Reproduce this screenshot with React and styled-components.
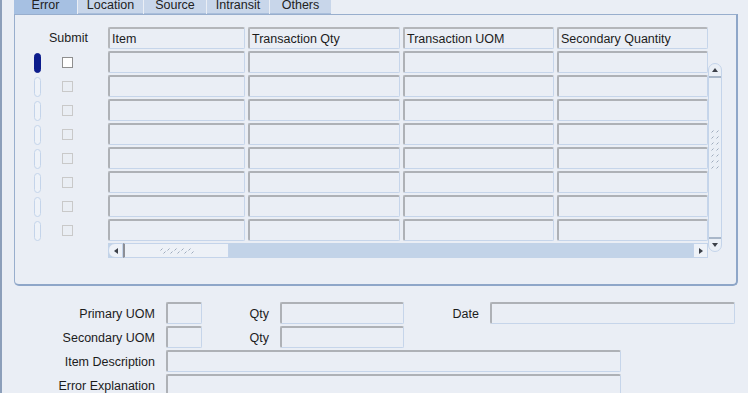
import React from 'react';
import styled, { createGlobalStyle } from 'styled-components';

const GlobalStyle = createGlobalStyle`
  * { box-sizing: border-box; }
  body {
    margin: 0;
    background: #eaeef5;
    font-family: "Liberation Sans", Arial, sans-serif;
    font-size: 12.5px;
    color: #1c1c1c;
  }
`;

const Frame = styled.div`
  height: 393px;
  width: 748px;
  overflow: hidden;
  border-left: 2px solid #8c9fba;
`;

const TabBar = styled.div`
  display: flex;
  margin: -8px 0 0 12px;
  height: 22px;
`;

const Tab = styled.div`
  height: 22px;
  padding-top: 6px;
  width: ${p => p.$w}px;
  margin-right: 1px;
  text-align: center;
  background: ${p => (p.$active ? '#a6c0e2' : '#c8d6ea')};
  border-radius: 0 4px 0 0;
  color: #222;
  border-bottom: ${p => (p.$active ? 'none' : '1px solid #a9bedb')};
`;

const Panel = styled.div`
  margin-left: 12px;
  width: 724px;
  height: 272px;
  border: 1px solid #98aecd;
  border-right: 2px solid #8ea6c8;
  border-bottom: 2px solid #8ea6c8;
  border-radius: 0 0 5px 5px;
  padding: 12px 0 0 19px;
`;

const Table = styled.div`
  display: flex;
  align-items: flex-start;
`;

const IndicatorCol = styled.div`
  width: 7px;
  display: flex;
  flex-direction: column;
  padding-top: 26px;
  gap: 4px;
`;

const Indicator = styled.div`
  width: 7px;
  height: 20px;
  border-radius: 4px;
  background: ${p => (p.$current ? '#0c1c8c' : '#eef2f8')};
  border: 1px solid ${p => (p.$current ? '#0c1c8c' : '#c4d4ea')};
`;

const SubmitCol = styled.div`
  width: 67px;
  display: flex;
  flex-direction: column;
`;

const SubmitHead = styled.div`
  height: 22px;
  line-height: 23px;
  padding-left: 8px;
  margin-bottom: 2px;
`;

const CheckCell = styled.div`
  height: 24px;
  padding: 6px 0 0 21px;
`;

const Check = styled.div`
  width: 11px;
  height: 11px;
  border: 1px solid ${p => (p.$enabled ? '#8f8f8f' : '#c9c9c9')};
  background: ${p => (p.$enabled ? '#ffffff' : '#eaeef4')};
`;

const DataArea = styled.div`
  width: 600px;
  display: flex;
  flex-direction: column;
  gap: 2px;
`;

const Row = styled.div`
  display: flex;
  gap: 3px;
  height: 22px;
`;

const Cell = styled.div`
  width: ${p => p.$w}px;
  height: 22px;
  border: 1px solid #c6d5ea;
  border-top: 2px solid ${p => (p.$head ? '#b4b6ba' : '#aeb1b6')};
  border-left: 2px solid ${p => (p.$head ? '#b4b6ba' : '#aeb1b6')};
  border-radius: 2px;
  background: #eaeef5;
  padding-left: 2px;
  line-height: 20px;
  white-space: nowrap;
  overflow: hidden;
`;

const HScroll = styled.div`
  display: flex;
  height: 15px;
  background: #c2d3e8;
`;

const ArrowBtn = styled.div`
  width: 15px;
  height: 15px;
  background: #eef2f8;
  border: 1px solid #c4d4ea;
  border-radius: ${p => p.$r};
  display: flex;
  align-items: center;
  justify-content: center;
`;

const HThumb = styled.div`
  width: 106px;
  height: 15px;
  background: #edf1f7;
  border: 1px solid #c4d4ea;
  border-left: 2px solid #8c8f96;
  display: flex;
  align-items: center;
  justify-content: center;
`;

const Spacer = styled.div`
  flex: 1;
`;

const VScroll = styled.div`
  width: 14px;
  height: 189px;
  margin-top: 36px;
  border: 1px solid #c4d4ea;
  border-radius: 7px;
  background: #eaeff6;
  display: flex;
  flex-direction: column;
  align-items: center;
`;

const VBtn = styled.div`
  width: 12px;
  height: 14px;
  display: flex;
  align-items: center;
  justify-content: center;
  border-${p => p.$side}: 2px solid #a9b7c9;
`;

const VGrip = styled.div`
  margin-top: 52px;
  width: 12px;
  display: flex;
  justify-content: center;
`;

const Form = styled.div`
  margin-top: 16px;
  display: flex;
  flex-direction: column;
  gap: 2px;
`;

const FormRow = styled.div`
  display: flex;
  align-items: center;
  height: 22px;
`;

const Label = styled.div`
  width: ${p => p.$w}px;
  text-align: right;
  margin-right: 11px;
  white-space: nowrap;
  padding-top: 1px;
`;

const Field = styled.div`
  width: ${p => p.$w}px;
  height: 22px;
  border: 1px solid #c6d5ea;
  border-top: 2px solid #aeb1b6;
  border-left: 2px solid #aeb1b6;
  border-radius: 2px;
  background: #eaeef5;
`;

const Tri = ({ dir }) => {
  const pts = {
    up: '1,5 7,5 4,1',
    down: '1,1 7,1 4,5',
    left: '5,1 5,7 1,4',
    right: '1,1 1,7 5,4',
  }[dir];
  const vertical = dir === 'up' || dir === 'down';
  return (
    <svg width={vertical ? 8 : 6} height={vertical ? 6 : 8}>
      <polygon points={pts} fill="#3c4048" />
    </svg>
  );
};

// small diagonal grip marks, staggered rows
const Grip = ({ cols, rows, dx, dy, shift }) => {
  const marks = [];
  for (let r = 0; r < rows; r++) {
    for (let c = 0; c < cols; c++) {
      const x = c * dx + (r % 2 ? shift : 0);
      const y = r * dy;
      marks.push(<line key={`${r}-${c}`} x1={x + 0.5} y1={y + 2.5} x2={x + 2.5} y2={y + 0.5} stroke="#9eabbd" strokeWidth="1" />);
    }
  }
  return (
    <svg width={(cols - 1) * dx + shift + 3} height={(rows - 1) * dy + 3}>
      {marks}
    </svg>
  );
};

const tabs = [
  { name: 'Error', w: 63 },
  { name: 'Location', w: 65 },
  { name: 'Source', w: 62 },
  { name: 'Intransit', w: 62 },
  { name: 'Others', w: 61 },
];

const columns = [
  { title: 'Item', w: 137 },
  { title: 'Transaction Qty', w: 152 },
  { title: 'Transaction UOM', w: 151 },
  { title: 'Secondary Quantity', w: 151 },
];

const rows = [0, 1, 2, 3, 4, 5, 6, 7];

export default function App() {
  return (
    <>
      <GlobalStyle />
      <Frame>
        <TabBar>
          {tabs.map((t, i) => (
            <Tab key={t.name} $w={t.w} $active={i === 0}>{t.name}</Tab>
          ))}
        </TabBar>
        <Panel>
          <Table>
            <IndicatorCol>
              {rows.map(r => <Indicator key={r} $current={r === 0} />)}
            </IndicatorCol>
            <SubmitCol>
              <SubmitHead>Submit</SubmitHead>
              {rows.map(r => (
                <CheckCell key={r}><Check $enabled={r === 0} /></CheckCell>
              ))}
            </SubmitCol>
            <DataArea>
              <Row>
                {columns.map(c => <Cell key={c.title} $w={c.w} $head>{c.title}</Cell>)}
              </Row>
              {rows.map(r => (
                <Row key={r}>
                  {columns.map(c => <Cell key={c.title} $w={c.w} />)}
                </Row>
              ))}
              <HScroll>
                <ArrowBtn $r="7px 0 0 7px"><Tri dir="left" /></ArrowBtn>
                <HThumb><Grip cols={5} rows={2} dx={7} dy={3} shift={3} /></HThumb>
                <Spacer />
                <ArrowBtn $r="0"><Tri dir="right" /></ArrowBtn>
              </HScroll>
            </DataArea>
            <VScroll>
              <VBtn $side="bottom"><Tri dir="up" /></VBtn>
              <VGrip><Grip cols={2} rows={7} dx={5} dy={6} shift={0} /></VGrip>
              <Spacer />
              <VBtn $side="top"><Tri dir="down" /></VBtn>
            </VScroll>
          </Table>
        </Panel>
        <Form>
          <FormRow>
            <Label $w={153}>Primary UOM</Label>
            <Field $w={36} />
            <Label $w={67}>Qty</Label>
            <Field $w={124} />
            <Label $w={75}>Date</Label>
            <Field $w={245} />
          </FormRow>
          <FormRow>
            <Label $w={153}>Secondary UOM</Label>
            <Field $w={36} />
            <Label $w={67}>Qty</Label>
            <Field $w={124} />
          </FormRow>
          <FormRow>
            <Label $w={153}>Item Description</Label>
            <Field $w={455} />
          </FormRow>
          <FormRow>
            <Label $w={153}>Error Explanation</Label>
            <Field $w={455} />
          </FormRow>
        </Form>
      </Frame>
    </>
  );
}
